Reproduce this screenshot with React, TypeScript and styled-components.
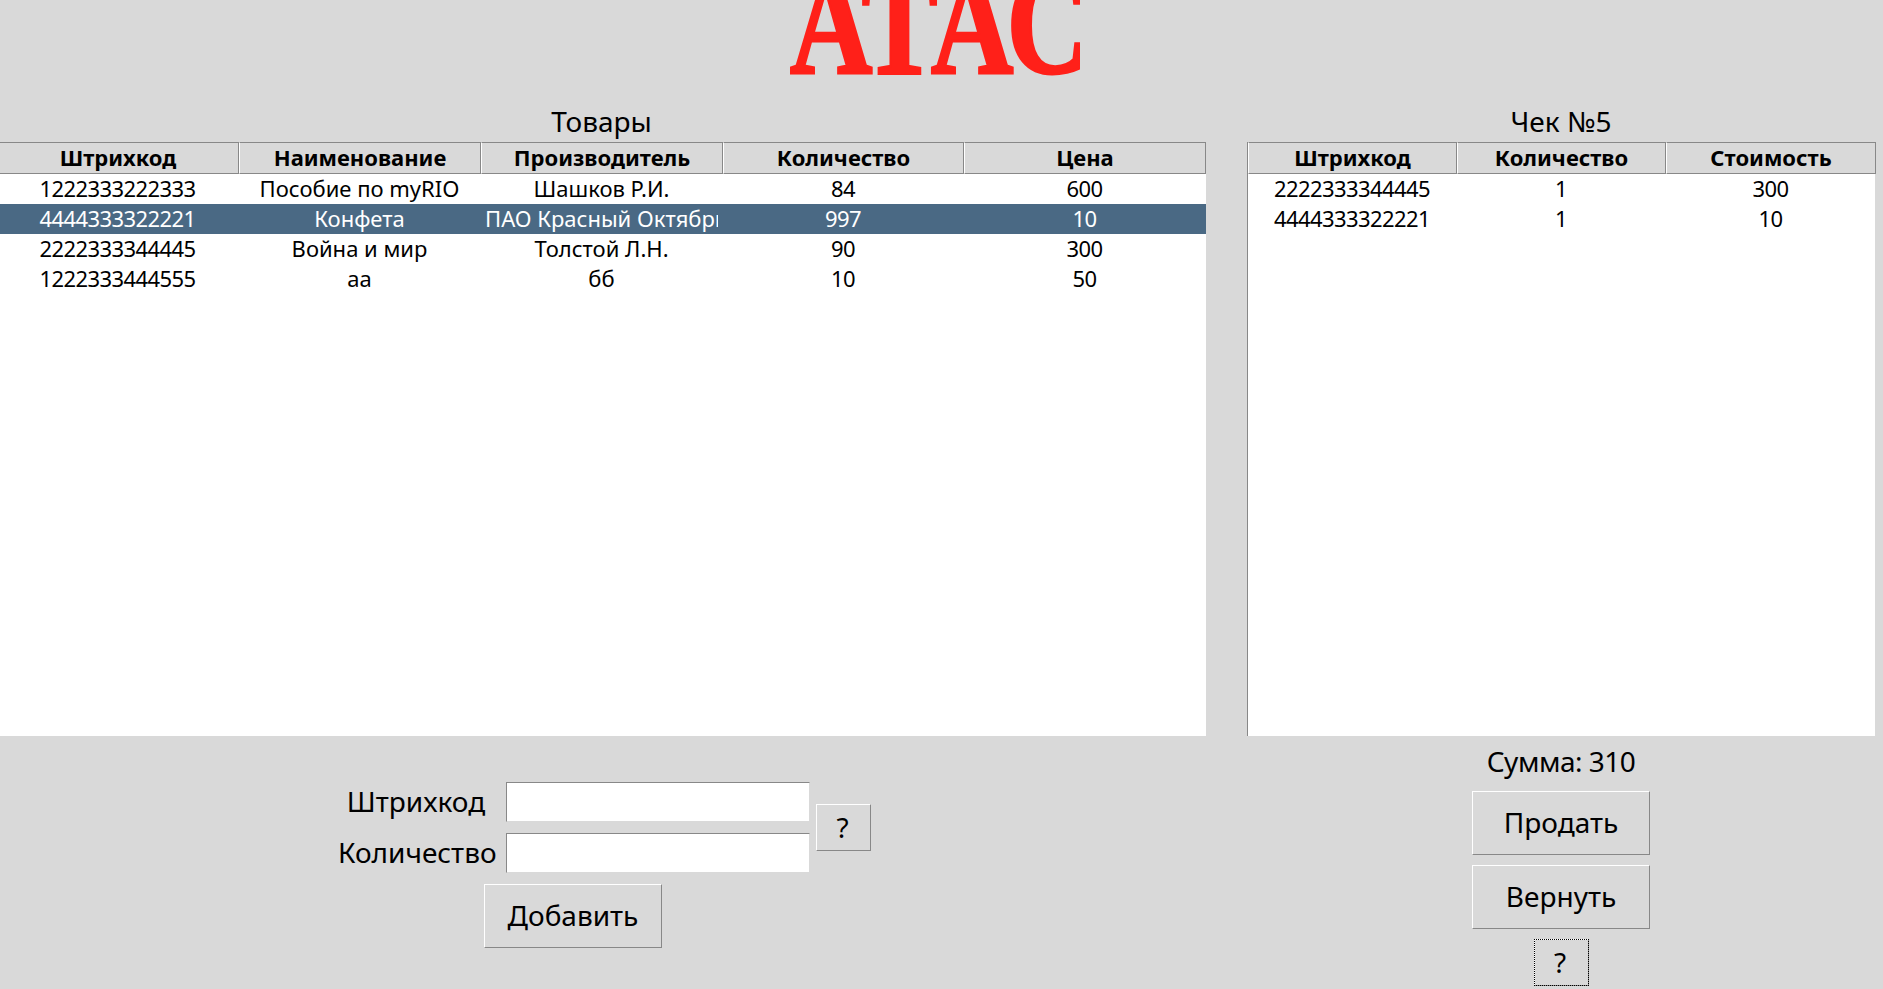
import React from "react";
import styled, { createGlobalStyle } from "styled-components";

const GlobalStyle = createGlobalStyle`
    html, body {
        margin: 0;
        padding: 0;
        background: #d9d9d9;
        overflow: hidden;
    }
`;

const Window = styled.div`
    width: 1883px;
    height: 989px;
    overflow: hidden;
    background: #d9d9d9;
    color: #000000;
    font-family: "Noto Sans", sans-serif;
`;
const LogoBar = styled.div`
    height: 103px;
    display: flex;
    justify-content: center;
    overflow: hidden;
`;
const Logo = styled.div`
    width: 290px;
    height: 103px;
    margin-right: 13px;
    margin-top: -20px;
    overflow: hidden;
`;
const LogoText = styled.div`
    color: #ff2019;
    -webkit-text-stroke: 2.5px #ff2019;
    font-family: "Liberation Serif", serif;
    font-weight: 700;
    font-size: 124px;
    line-height: 103px;
    letter-spacing: -1px;
    white-space: nowrap;
    transform-origin: 0 93px;
    transform: scale(0.92, 1.18);
`;
const Columns = styled.div`
    display: grid;
    grid-template-columns: 1209px 628px;
    column-gap: 41px;
    margin-left: -3px;
`;
const Panel = styled.div`
    display: flex;
    flex-direction: column;
`;
const PanelTitle = styled.div`
    height: 39px;
    line-height: 36px;
    text-align: center;
    font-size: 28px;
`;
const Table = styled.div<{ $outlined?: boolean }>`
    height: 594px;
    background: #ffffff;
    box-sizing: border-box;
    border-left: ${(p) => (p.$outlined ? "1px solid #888888" : "none")};
`;
const HeaderRow = styled.div<{ $columns: string }>`
    display: grid;
    grid-template-columns: ${(p) => p.$columns};
    height: 32px;
    background: #d9d9d9;
`;
const HeaderCell = styled.div`
    box-sizing: border-box;
    border-top: 1px solid #888888;
    border-left: 1px solid #ffffff;
    border-right: 1px solid #888888;
    border-bottom: 1px solid #888888;
    line-height: 29px;
    text-align: center;
    font-size: 22px;
    font-weight: 700;
`;
const Row = styled.div<{ $columns: string; $selected?: boolean }>`
    display: grid;
    grid-template-columns: ${(p) => p.$columns};
    height: 30px;
    background: ${(p) => (p.$selected ? "#4a6984" : "#ffffff")};
    color: ${(p) => (p.$selected ? "#ffffff" : "#000000")};
`;
const Cell = styled.div<{ $numeric?: boolean }>`
    min-width: 0;
    margin: 0 5px 0 4px;
    overflow: hidden;
    white-space: nowrap;
    text-align: center;
    line-height: 28px;
    font-size: 22px;
    letter-spacing: ${(p) => (p.$numeric ? "-0.58px" : "0")};
`;
const Controls = styled.div`
    display: grid;
    grid-template-columns: 1209px 628px;
    column-gap: 41px;
    margin-left: -3px;
`;
const AddForm = styled.div`
    display: grid;
    grid-template-columns: 168px 304px 61px;
    grid-template-rows: 40px 40px 63px;
    row-gap: 11px;
    padding: 46px 0 0 341px;
`;
const FieldLabel = styled.div`
    padding-right: 12px;
    text-align: center;
    white-space: nowrap;
    line-height: 39px;
    font-size: 28px;
`;
const TextField = styled.input`
    box-sizing: border-box;
    width: 304px;
    height: 40px;
    margin: 0;
    padding: 0;
    background: #ffffff;
    border-style: solid;
    border-width: 1px;
    border-color: #888888 #d9d9d9 #d9d9d9 #888888;
    outline: none;
`;
const TkButton = styled.button<{ $focused?: boolean }>`
    box-sizing: border-box;
    margin: 0;
    padding: 0 0 2px;
    width: 178px;
    height: 64px;
    background: #d9d9d9;
    color: #000000;
    border-style: solid;
    border-width: 1px;
    border-color: #ffffff #888888 #888888 #ffffff;
    font-family: "Noto Sans", sans-serif;
    font-size: 28px;
    outline: ${(p) => (p.$focused ? "1px dotted #000000" : "none")};
    outline-offset: ${(p) => (p.$focused ? "-1px" : "0")};
`;
const HintButton = styled(TkButton)`
    width: 55px;
    height: 47px;
    padding-right: 2px;
`;
const FormHint = styled(HintButton)`
    grid-column: 3;
    grid-row: 1 / 3;
    align-self: center;
    justify-self: end;
`;
const AddButton = styled(TkButton)`
    grid-column: 1 / 3;
    justify-self: center;
    margin-right: 2px;
`;
const CheckActions = styled.div`
    display: flex;
    flex-direction: column;
    align-items: center;
    gap: 10px;
`;
const Total = styled.div`
    height: 55px;
    line-height: 51px;
    font-size: 28px;
    letter-spacing: -0.5px;
    margin-bottom: -10px;
`;

const goodsColumns = "242px 242px 242px 241px 242px";
const checkColumns = "209px 209px 210px";

const goods = [
    ["1222333222333", "Пособие по myRIO", "Шашков Р.И.", "84", "600"],
    ["4444333322221", "Конфета", "ПАО Красный Октябрь", "997", "10"],
    ["2222333344445", "Война и мир", "Толстой Л.Н.", "90", "300"],
    ["1222333444555", "аа", "бб", "10", "50"],
];
const checkItems = [
    ["2222333344445", "1", "300"],
    ["4444333322221", "1", "10"],
];

const isNumber = (value: string) => /^\d+$/.test(value);

const App = () => {
    return (
        <Window>
            <GlobalStyle />
            <LogoBar>
                <Logo>
                    <LogoText>АТАС</LogoText>
                </Logo>
            </LogoBar>
            <Columns>
                <Panel>
                    <PanelTitle>Товары</PanelTitle>
                    <Table>
                        <HeaderRow $columns={goodsColumns}>
                            {["Штрихкод", "Наименование", "Производитель", "Количество", "Цена"].map((h) => (
                                <HeaderCell key={h}>{h}</HeaderCell>
                            ))}
                        </HeaderRow>
                        {goods.map((row, i) => (
                            <Row key={row[0]} $columns={goodsColumns} $selected={i === 1}>
                                {row.map((value, j) => (
                                    <Cell key={j} $numeric={isNumber(value)}>{value}</Cell>
                                ))}
                            </Row>
                        ))}
                    </Table>
                </Panel>
                <Panel>
                    <PanelTitle>Чек №5</PanelTitle>
                    <Table $outlined>
                        <HeaderRow $columns={checkColumns}>
                            {["Штрихкод", "Количество", "Стоимость"].map((h) => (
                                <HeaderCell key={h}>{h}</HeaderCell>
                            ))}
                        </HeaderRow>
                        {checkItems.map((row) => (
                            <Row key={row[0]} $columns={checkColumns}>
                                {row.map((value, j) => (
                                    <Cell key={j} $numeric={isNumber(value)}>{value}</Cell>
                                ))}
                            </Row>
                        ))}
                    </Table>
                </Panel>
            </Columns>
            <Controls>
                <AddForm>
                    <FieldLabel>Штрихкод</FieldLabel>
                    <TextField />
                    <FormHint>?</FormHint>
                    <FieldLabel>Количество</FieldLabel>
                    <TextField />
                    <AddButton>Добавить</AddButton>
                </AddForm>
                <CheckActions>
                    <Total>Сумма: 310</Total>
                    <TkButton>Продать</TkButton>
                    <TkButton>Вернуть</TkButton>
                    <HintButton $focused>?</HintButton>
                </CheckActions>
            </Controls>
        </Window>
    );
};

export default App;
